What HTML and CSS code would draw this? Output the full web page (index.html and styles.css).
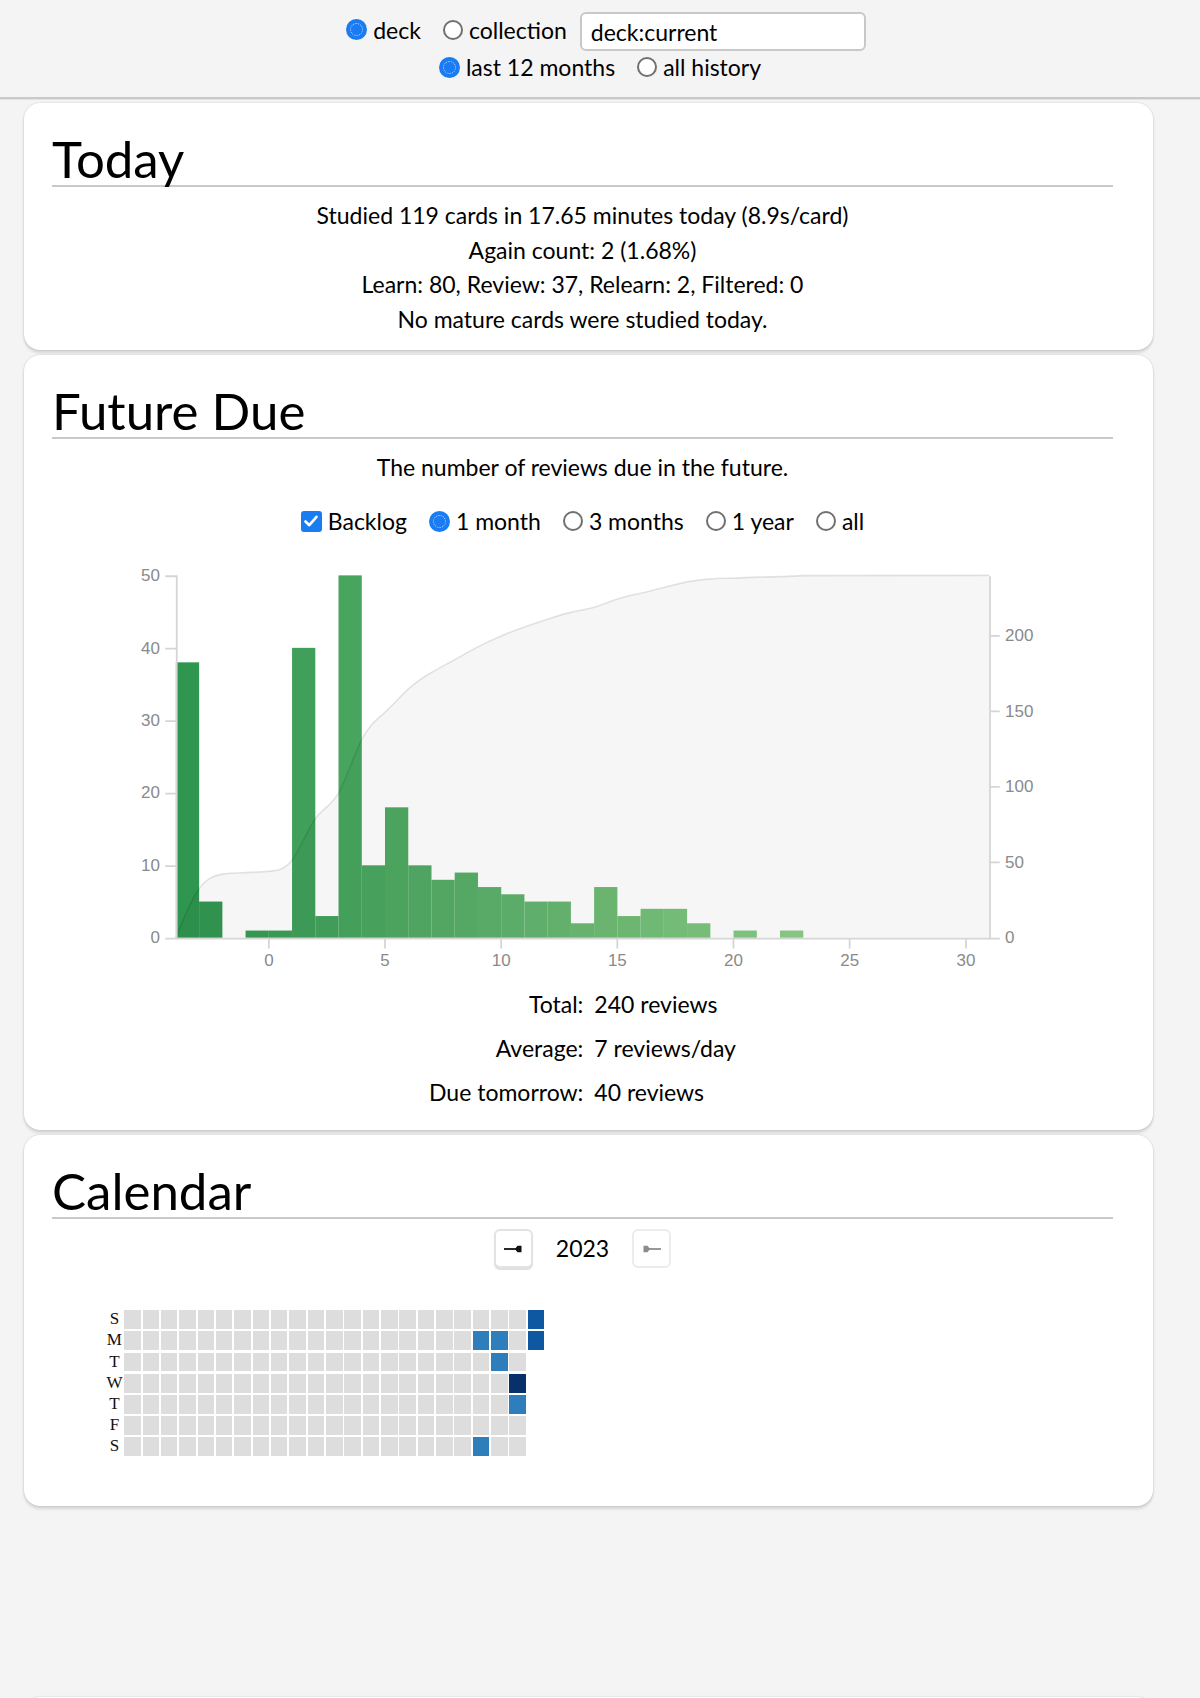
FILE: index.html
```html
<!DOCTYPE html>
<html lang="en">
<head>
<meta charset="utf-8">
<title>Statistics</title>
<link rel="stylesheet" href="styles.css">
</head>
<body>
<header class="topbar">
  <div class="toprow toprow-first">
    <label class="opt"><span class="radio on"></span>deck</label>
    <label class="opt opt-last"><span class="radio"></span>collection</label>
    <input class="search" type="text" value="deck:current">
  </div>
  <div class="toprow">
    <label class="opt"><span class="radio on"></span>last 12 months</label>
    <label class="opt"><span class="radio"></span>all history</label>
  </div>
</header>

<main class="cards">
  <section class="card">
    <h1 class="title">Today</h1>
    <div class="content">
      <div class="lines">
        <div>Studied 119 cards in 17.65 minutes today (8.9s/card)</div>
        <div>Again count: 2 (1.68%)</div>
        <div>Learn: 80, Review: 37, Relearn: 2, Filtered: 0</div>
        <div>No mature cards were studied today.</div>
      </div>
    </div>
  </section>

  <section class="card card-future">
    <h1 class="title">Future Due</h1>
    <div class="content">
      <div class="subtitle">The number of reviews due in the future.</div>
      <div class="controls">
        <label class="opt"><span class="checkbox"><svg viewBox="0 0 20 20" width="20" height="20"><path d="M4.5 10.5 L8.3 14.2 L15.5 5.8" fill="none" stroke="#fff" stroke-width="2.6" stroke-linecap="round" stroke-linejoin="round"/></svg></span>Backlog</label>
        <label class="opt"><span class="radio on"></span>1 month</label>
        <label class="opt"><span class="radio"></span>3 months</label>
        <label class="opt"><span class="radio"></span>1 year</label>
        <label class="opt"><span class="radio"></span>all</label>
      </div>
      <svg class="chart" viewBox="0 0 600 250" width="1061" height="442">
        <g class="bars">
          <rect x="70" y="69.2" width="13.16" height="155.8" fill="#2e964f"/>
          <rect x="83.143" y="204.5" width="13.16" height="20.5" fill="#329851"/>
          <rect x="109.429" y="220.9" width="13.16" height="4.1" fill="#399c55"/>
          <rect x="122.571" y="220.9" width="13.16" height="4.1" fill="#3c9e57"/>
          <rect x="135.714" y="61" width="13.16" height="164" fill="#40a05a"/>
          <rect x="148.857" y="212.7" width="13.16" height="12.3" fill="#43a25c"/>
          <rect x="162" y="20" width="13.16" height="205" fill="#47a55e"/>
          <rect x="175.143" y="184" width="13.16" height="41" fill="#4aa760"/>
          <rect x="188.286" y="151.2" width="13.16" height="73.8" fill="#4ea962"/>
          <rect x="201.429" y="184" width="13.16" height="41" fill="#51ab64"/>
          <rect x="214.571" y="192.2" width="13.16" height="32.8" fill="#55ad66"/>
          <rect x="227.714" y="188.1" width="13.16" height="36.9" fill="#58af68"/>
          <rect x="240.857" y="196.3" width="13.16" height="28.7" fill="#5cb16a"/>
          <rect x="254" y="200.4" width="13.16" height="24.6" fill="#60b36d"/>
          <rect x="267.143" y="204.5" width="13.16" height="20.5" fill="#63b56f"/>
          <rect x="280.286" y="204.5" width="13.16" height="20.5" fill="#67b771"/>
          <rect x="293.429" y="216.8" width="13.16" height="8.2" fill="#6ab973"/>
          <rect x="306.571" y="196.3" width="13.16" height="28.7" fill="#6ebb75"/>
          <rect x="319.714" y="212.7" width="13.16" height="12.3" fill="#71bd77"/>
          <rect x="332.857" y="208.6" width="13.16" height="16.4" fill="#75c079"/>
          <rect x="346" y="208.6" width="13.16" height="16.4" fill="#78c27b"/>
          <rect x="359.143" y="216.8" width="13.16" height="8.2" fill="#7cc47e"/>
          <rect x="385.429" y="220.9" width="13.16" height="4.1" fill="#83c882"/>
          <rect x="411.714" y="220.9" width="13.16" height="4.1" fill="#8acc86"/>
        </g>
        <g transform="matrix(13.142857 0 0 -0.8541667 122.571 225)">
          <path class="area-fill" d="M-4 0 L-3.8333 6.3333 C-3.6667 12.6667 -3.3333 25.3333 -3 32.5 C-2.6667 39.6667 -2.3333 41.3333 -2 42.1667 C-1.6667 43 -1.3333 43 -1 43.1667 C-0.6667 43.3333 -0.3333 43.6667 0 44 C0.3333 44.3333 0.6667 44.6667 1 51.5 C1.3333 58.3333 1.6667 71.6667 2 78.8333 C2.3333 86 2.6667 87 3 95.8333 C3.3333 104.6667 3.6667 121.3333 4 131.3333 C4.3333 141.3333 4.6667 144.6667 5 149.3333 C5.3333 154 5.6667 160 6 164.6667 C6.3333 169.3333 6.6667 172.6667 7 175.6667 C7.3333 178.6667 7.6667 181.3333 8 184.1667 C8.3333 187 8.6667 190 9 192.6667 C9.3333 195.3333 9.6667 197.6667 10 199.8333 C10.3333 202 10.6667 204 11 205.8333 C11.3333 207.6667 11.6667 209.3333 12 211 C12.3333 212.6667 12.6667 214.3333 13 215.5 C13.3333 216.6667 13.6667 217.3333 14 218.8333 C14.3333 220.3333 14.6667 222.6667 15 224.3333 C15.3333 226 15.6667 227 16 228.1667 C16.3333 229.3333 16.6667 230.6667 17 232 C17.3333 233.3333 17.6667 234.6667 18 235.6667 C18.3333 236.6667 18.6667 237.3333 19 237.6667 C19.3333 238 19.6667 238 20 238.1667 C20.3333 238.3333 20.6667 238.6667 21 238.8333 C21.3333 239 21.6667 239 22 239.1667 C22.3333 239.3333 22.6667 239.6667 23 239.8333 L31 240 L31 0 Z"/>
          <path class="area-line" vector-effect="non-scaling-stroke" d="M-4 0 L-3.8333 6.3333 C-3.6667 12.6667 -3.3333 25.3333 -3 32.5 C-2.6667 39.6667 -2.3333 41.3333 -2 42.1667 C-1.6667 43 -1.3333 43 -1 43.1667 C-0.6667 43.3333 -0.3333 43.6667 0 44 C0.3333 44.3333 0.6667 44.6667 1 51.5 C1.3333 58.3333 1.6667 71.6667 2 78.8333 C2.3333 86 2.6667 87 3 95.8333 C3.3333 104.6667 3.6667 121.3333 4 131.3333 C4.3333 141.3333 4.6667 144.6667 5 149.3333 C5.3333 154 5.6667 160 6 164.6667 C6.3333 169.3333 6.6667 172.6667 7 175.6667 C7.3333 178.6667 7.6667 181.3333 8 184.1667 C8.3333 187 8.6667 190 9 192.6667 C9.3333 195.3333 9.6667 197.6667 10 199.8333 C10.3333 202 10.6667 204 11 205.8333 C11.3333 207.6667 11.6667 209.3333 12 211 C12.3333 212.6667 12.6667 214.3333 13 215.5 C13.3333 216.6667 13.6667 217.3333 14 218.8333 C14.3333 220.3333 14.6667 222.6667 15 224.3333 C15.3333 226 15.6667 227 16 228.1667 C16.3333 229.3333 16.6667 230.6667 17 232 C17.3333 233.3333 17.6667 234.6667 18 235.6667 C18.3333 236.6667 18.6667 237.3333 19 237.6667 C19.3333 238 19.6667 238 20 238.1667 C20.3333 238.3333 20.6667 238.6667 21 238.8333 C21.3333 239 21.6667 239 22 239.1667 C22.3333 239.3333 22.6667 239.6667 23 239.8333 L31 240"/>
        </g>
        <g class="axis">
          <path d="M64 20.5 H70.5 V225.5 H64"/>
          <path d="M64 184.5 H70.5 M64 143.5 H70.5 M64 102.5 H70.5 M64 61.5 H70.5"/>
          <path d="M530.5 20.5 V225.5 H536"/>
          <path d="M530.5 182.3 H536 M530.5 139.6 H536 M530.5 96.9 H536 M530.5 54.2 H536"/>
          <path d="M70.5 225.5 H530.5"/>
          <path d="M122.6 225.5 V231 M188.3 225.5 V231 M254 225.5 V231 M319.7 225.5 V231 M385.4 225.5 V231 M451.1 225.5 V231 M516.9 225.5 V231"/>
        </g>
        <g class="ticks ticks-left">
          <text x="61" y="228.2">0</text>
          <text x="61" y="187.2">10</text>
          <text x="61" y="146.2">20</text>
          <text x="61" y="105.2">30</text>
          <text x="61" y="64.2">40</text>
          <text x="61" y="23.2">50</text>
        </g>
        <g class="ticks ticks-right">
          <text x="539" y="228.2">0</text>
          <text x="539" y="185.5">50</text>
          <text x="539" y="142.8">100</text>
          <text x="539" y="100.1">150</text>
          <text x="539" y="57.4">200</text>
        </g>
        <g class="ticks ticks-bottom">
          <text x="122.6" y="241">0</text>
          <text x="188.3" y="241">5</text>
          <text x="254" y="241">10</text>
          <text x="319.7" y="241">15</text>
          <text x="385.4" y="241">20</text>
          <text x="451.1" y="241">25</text>
          <text x="516.9" y="241">30</text>
        </g>
      </svg>
      <table class="summary">
        <tr><td class="k">Total:</td><td class="v">240 reviews</td></tr>
        <tr><td class="k">Average:</td><td class="v">7 reviews/day</td></tr>
        <tr><td class="k">Due tomorrow:</td><td class="v">40 reviews</td></tr>
      </table>
    </div>
  </section>

  <section class="card card-calendar">
    <h1 class="title">Calendar</h1>
    <div class="content">
      <div class="yearnav">
        <button class="navbtn" type="button"><svg viewBox="0 0 18 8" width="18" height="8"><path d="M0 4 H12" stroke="#111" stroke-width="1.8"/><path d="M11.5 3.2 L13.5 0.8 H17.5 V7.2 H13.5 L11.5 4.8 Z" fill="#111"/></svg></button>
        <span class="year">2023</span>
        <button class="navbtn disabled" type="button"><svg viewBox="0 0 18 8" width="18" height="8"><path d="M6 4 H18" stroke="#8c8c8c" stroke-width="1.8"/><path d="M6.5 3.2 L4.5 0.8 H0.5 V7.2 H4.5 L6.5 4.8 Z" fill="#8c8c8c"/></svg></button>
      </div>
      <div class="calendar">
        <span class="dl">S</span><span class="dl">M</span><span class="dl">T</span><span class="dl">W</span><span class="dl">T</span><span class="dl">F</span><span class="dl">S</span>
        <i></i><i></i><i></i><i></i><i></i><i></i><i></i>
        <i></i><i></i><i></i><i></i><i></i><i></i><i></i>
        <i></i><i></i><i></i><i></i><i></i><i></i><i></i>
        <i></i><i></i><i></i><i></i><i></i><i></i><i></i>
        <i></i><i></i><i></i><i></i><i></i><i></i><i></i>
        <i></i><i></i><i></i><i></i><i></i><i></i><i></i>
        <i></i><i></i><i></i><i></i><i></i><i></i><i></i>
        <i></i><i></i><i></i><i></i><i></i><i></i><i></i>
        <i></i><i></i><i></i><i></i><i></i><i></i><i></i>
        <i></i><i></i><i></i><i></i><i></i><i></i><i></i>
        <i></i><i></i><i></i><i></i><i></i><i></i><i></i>
        <i></i><i></i><i></i><i></i><i></i><i></i><i></i>
        <i></i><i></i><i></i><i></i><i></i><i></i><i></i>
        <i></i><i></i><i></i><i></i><i></i><i></i><i></i>
        <i></i><i></i><i></i><i></i><i></i><i></i><i></i>
        <i></i><i></i><i></i><i></i><i></i><i></i><i></i>
        <i></i><i></i><i></i><i></i><i></i><i></i><i></i>
        <i></i><i></i><i></i><i></i><i></i><i></i><i></i>
        <i></i><i></i><i></i><i></i><i></i><i></i><i></i>
        <i></i><i class="m"></i><i></i><i></i><i></i><i></i><i class="m"></i>
        <i></i><i class="m"></i><i class="m"></i><i></i><i></i><i></i><i></i>
        <i></i><i></i><i></i><i class="n"></i><i class="m"></i><i></i><i></i>
        <i class="d"></i><i class="d"></i>
      </div>
    </div>
  </section>

  <section class="card card-stub"></section>
</main>
</body>
</html>
```

FILE: styles.css
```css
* { box-sizing: border-box; }

html, body {
  margin: 0;
  padding: 0;
  background: #f4f4f4;
  color: #000;
  font-family: Lato, "Open Sans", sans-serif;
  font-size: 23px;
}

/* ---------- top bar ---------- */
.topbar {
  padding: 12px 0 17px;
  border-bottom: 2px solid #c9c9c9;
  box-shadow: 0 1px 0 #e2e2e2;
}

.toprow {
  display: flex;
  justify-content: center;
  align-items: center;
}

.toprow-first {
  height: 39px;
  padding-left: 12px;
}

.toprow-first .opt {
  padding-bottom: 4px;
}

.toprow + .toprow {
  margin-top: 3px;
  height: 26px;
}

.opt {
  display: inline-flex;
  align-items: center;
  gap: 6px;
  margin-right: 22px;
  white-space: nowrap;
}

.opt:last-child { margin-right: 0; }
.opt-last { margin-right: 13px; }

.radio {
  display: inline-block;
  width: 20px;
  height: 20px;
  border-radius: 50%;
  border: 2px solid #707070;
  background: #fff;
  flex: none;
}

.radio.on {
  border: none;
  width: 21px;
  height: 21px;
  background: #1a7cf3;
  outline: 1px dotted rgba(255, 255, 255, 0.75);
  outline-offset: -5px;
}

.checkbox {
  display: inline-flex;
  width: 21px;
  height: 21px;
  border-radius: 3px;
  background: #1a7cf3;
  flex: none;
  align-items: center;
  justify-content: center;
}

.search {
  width: 286px;
  height: 39px;
  border: 2px solid #c8c8c8;
  border-radius: 6px;
  background: #fff;
  padding: 0 9px;
  font: inherit;
  color: #000;
}

/* ---------- cards ---------- */
.cards {
  padding-top: 4px;
}

.card {
  width: 1129px;
  margin: 0 47px 5px 24px;
  background: #fff;
  border-radius: 16px;
  padding: 30px 40px 14px 28px;
  box-shadow: 0 0 2px rgba(0, 0, 0, 0.18), 0 3px 3px rgba(0, 0, 0, 0.12);
}

.title {
  margin: 0;
  font-size: 51px;
  font-weight: 400;
  line-height: 52px;
  border-bottom: 2px solid #c9c9c9;
}

.content {
  padding-top: 11px;
  text-align: center;
}

.lines {
  line-height: 34.5px;
}

.subtitle {
  line-height: 34.5px;
}

.controls {
  margin-top: 19.5px;
  height: 34.5px;
  display: flex;
  justify-content: center;
  align-items: center;
}

.chart {
  display: block;
  margin-top: 1.5px;
  overflow: visible;
}

.area-fill { fill: rgba(0, 0, 0, 0.035); }
.area-line { fill: none; stroke: rgba(0, 0, 0, 0.1); stroke-width: 1.6; }

.axis path { fill: none; stroke: #d5d5d5; stroke-width: 1; }

.ticks text {
  font-family: "Liberation Sans", Arial, sans-serif;
  font-size: 9.6px;
  fill: #8a8a8a;
}
.ticks-left text { text-anchor: end; }
.ticks-right text { text-anchor: start; }
.ticks-bottom text { text-anchor: middle; }

.summary {
  margin: 0 auto;
  border-collapse: collapse;
}

.summary td {
  height: 44px;
  padding: 0 5.5px;
  white-space: nowrap;
}

.summary .k { text-align: right; }
.summary .v { text-align: left; }

.card-future { padding-bottom: 16px; }

/* ---------- calendar ---------- */
.card-calendar { padding-bottom: 50px; }
.card-calendar .content { padding-top: 0; }

.yearnav {
  margin-top: 10px;
  display: flex;
  justify-content: center;
  align-items: center;
  gap: 23px;
}

.navbtn {
  width: 39px;
  height: 39px;
  padding: 0;
  border: 2px solid #e3e3e3;
  border-radius: 6px;
  background: #fff;
  display: flex;
  align-items: center;
  justify-content: center;
  box-shadow: 0 2px 1px rgba(0, 0, 0, 0.13);
}

.navbtn.disabled {
  border-color: #ececec;
  box-shadow: none;
}

.year {
  line-height: 39px;
}

.calendar {
  margin: 42.3px 0 0 54.4px;
  display: grid;
  grid-auto-flow: column;
  grid-template-rows: repeat(7, 18.8px);
  grid-template-columns: 16px;
  grid-auto-columns: 16.5px;
  column-gap: 1.85px;
  row-gap: 2.4px;
  justify-content: start;
}

.dl {
  font-family: "Liberation Serif", "DejaVu Serif", serif;
  font-size: 17px;
  line-height: 18.8px;
  text-align: center;
  color: #111;
}

.calendar i { display: block; background: #dddddd; }
.calendar i.m { background: #2f7ebc; }
.calendar i.d { background: #0e58a2; }
.calendar i.n { background: #08306b; }

.card-stub {
  margin-top: 191px;
  height: 60px;
  padding: 0;
}
```
